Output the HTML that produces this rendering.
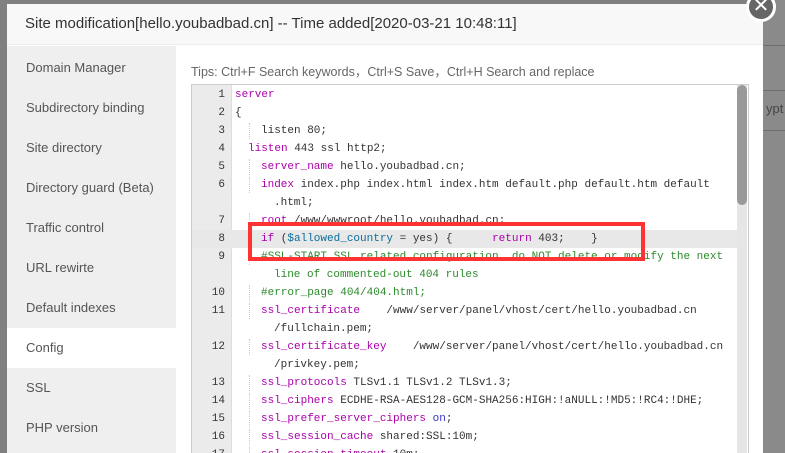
<!DOCTYPE html>
<html><head><meta charset="utf-8"><style>
*{margin:0;padding:0;box-sizing:border-box}
html,body{width:785px;height:453px;overflow:hidden}
body{background:#808080;font-family:"Liberation Sans",sans-serif;position:relative}
.bgr{position:absolute;left:763px;top:0;width:22px;height:453px;background:#8a8a8a}
.bgr div{position:absolute;left:0;width:22px;height:1px;background:#6f6f6f}
.modal{position:absolute;left:7px;top:4px;width:756px;height:449px;background:#fff;overflow:hidden}
.hd{position:absolute;left:0;top:0;width:756px;height:41px;background:#f8f8f8;border-bottom:1px solid #eee;font-size:15px;color:#333;padding:11px 0 0 18px}
.menu{position:absolute;left:0;top:42px;width:169px;height:407px;background:#efefef;padding-top:2px;overflow:hidden}
.menu div{height:40px;line-height:40px;padding-left:19px;font-size:13px;color:#555}
.menu .act{background:#fff}
.tips{position:absolute;left:184px;top:57px;font-size:12.5px;color:#666}
.ed{position:absolute;left:191px;top:84px;width:558px;height:369px;border:1px solid #ccc;border-bottom:none;overflow:hidden;background:#fff}
.gut{position:absolute;left:0;top:0;width:40px;height:369px;background:#ebebeb;border-right:1px solid #ddd}
.rows{position:absolute;left:0;top:1px;width:545px;height:367px;overflow:hidden}
.r{position:relative;height:18px;line-height:18px;font-family:"Liberation Mono",monospace;font-size:11px;color:#333;white-space:pre}
.r .n{position:absolute;left:0;width:33px;text-align:right;color:#333}
.r .c{position:absolute;top:0}
.r.hl{background:#e8e8e8}
.g{position:absolute;top:1px;height:16px;border-left:1px dotted #ccc}
.k{color:#a0a}.v{color:#0a6e9a}.m{color:#2d8a2d}.b{color:#33c}
.sb{position:absolute;left:737px;top:85px;width:10px;height:368px;background:#e6e6e6}
.sb div{position:absolute;left:0;top:0;width:10px;height:120px;border-radius:5px;background:#999}
.red{position:absolute;left:248px;top:222px;width:397px;height:39px;border:4px solid #f33}
.close{position:absolute;left:746px;top:0;width:30px;height:22px;overflow:hidden}
.close div{position:absolute;left:0;top:-8px;width:30px;height:30px;border-radius:50%;background:#666;border:3px solid #fff;color:#fff;font-size:20px;line-height:22px;text-align:center}
</style></head><body>
<div class="bgr"><div style="top:45px"></div><div style="top:90px"></div><div style="top:130px"></div></div>
<div style="position:absolute;left:766px;top:101px;width:19px;overflow:hidden;font-size:13px;color:#444;white-space:nowrap">ypt c</div>
<div class="modal">
<div class="hd">Site modification[hello.youbadbad.cn] -- Time added[2020-03-21 10:48:11]</div>
<div class="menu">
<div>Domain Manager</div><div>Subdirectory binding</div><div>Site directory</div><div>Directory guard (Beta)</div><div>Traffic control</div><div>URL rewirte</div><div>Default indexes</div><div class="act">Config</div><div>SSL</div><div>PHP version</div>
</div>
<div class="tips">Tips: Ctrl+F Search keywords，Ctrl+S Save，Ctrl+H Search and replace</div>
</div>
<div class="ed">
<div class="gut"></div>
<div class="rows">
<div class="r"><span class="n">1</span><span class="c" style="left:43px"><span class="k">server</span></span></div>
<div class="r"><span class="n">2</span><span class="c" style="left:43px">{</span></div>
<div class="r"><span class="n">3</span><span class="g" style="left:57px"></span><span class="c" style="left:69px">listen 80;</span></div>
<div class="r"><span class="n">4</span><span class="c" style="left:56px"><span class="k">listen</span> 443 ssl http2;</span></div>
<div class="r"><span class="n">5</span><span class="g" style="left:57px"></span><span class="c" style="left:69px"><span class="k">server_name</span> hello.youbadbad.cn;</span></div>
<div class="r"><span class="n">6</span><span class="g" style="left:57px"></span><span class="c" style="left:69px"><span class="k">index</span> index.php index.html index.htm default.php default.htm default</span></div>
<div class="r"><span class="c" style="left:82px">.html;</span></div>
<div class="r"><span class="n">7</span><span class="g" style="left:57px"></span><span class="c" style="left:69px"><span class="k">root</span> /www/wwwroot/hello.youbadbad.cn;</span></div>
<div class="r hl"><span class="n">8</span><span class="c" style="left:69px"><span class="k">if</span> (<span class="v">$allowed_country</span> = yes) {      <span class="k">return</span> 403;    }</span></div>
<div class="r"><span class="n">9</span><span class="g" style="left:57px"></span><span class="c m" style="left:69px">#SSL-START SSL related configuration, do NOT delete or modify the next</span></div>
<div class="r"><span class="c m" style="left:82px">line of commented-out 404 rules</span></div>
<div class="r"><span class="n">10</span><span class="g" style="left:57px"></span><span class="c m" style="left:69px">#error_page 404/404.html;</span></div>
<div class="r"><span class="n">11</span><span class="g" style="left:57px"></span><span class="c" style="left:69px"><span class="k">ssl_certificate</span>    /www/server/panel/vhost/cert/hello.youbadbad.cn</span></div>
<div class="r"><span class="c" style="left:82px">/fullchain.pem;</span></div>
<div class="r"><span class="n">12</span><span class="g" style="left:57px"></span><span class="c" style="left:69px"><span class="k">ssl_certificate_key</span>    /www/server/panel/vhost/cert/hello.youbadbad.cn</span></div>
<div class="r"><span class="c" style="left:82px">/privkey.pem;</span></div>
<div class="r"><span class="n">13</span><span class="g" style="left:57px"></span><span class="c" style="left:69px"><span class="k">ssl_protocols</span> TLSv1.1 TLSv1.2 TLSv1.3;</span></div>
<div class="r"><span class="n">14</span><span class="g" style="left:57px"></span><span class="c" style="left:69px"><span class="k">ssl_ciphers</span> ECDHE-RSA-AES128-GCM-SHA256:HIGH:!aNULL:!MD5:!RC4:!DHE;</span></div>
<div class="r"><span class="n">15</span><span class="g" style="left:57px"></span><span class="c" style="left:69px"><span class="k">ssl_prefer_server_ciphers</span> <span class="b">on</span>;</span></div>
<div class="r"><span class="n">16</span><span class="g" style="left:57px"></span><span class="c" style="left:69px"><span class="k">ssl_session_cache</span> shared:SSL:10m;</span></div>
<div class="r"><span class="n">17</span><span class="g" style="left:57px"></span><span class="c" style="left:69px"><span class="k">ssl_session_timeout</span> 10m;</span></div>
</div>
</div>
<div class="sb"><div></div></div>
<div class="red"></div>
<div class="close"><div>✕</div></div>
</body></html>
